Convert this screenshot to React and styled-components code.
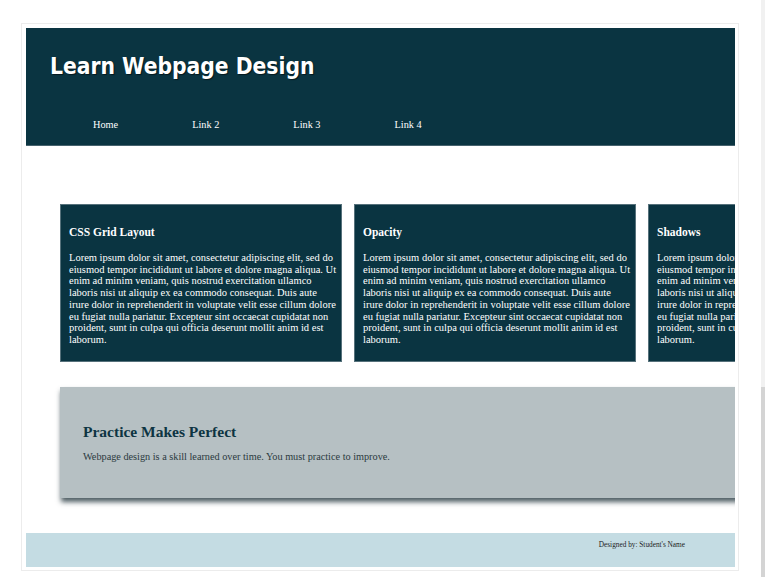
import React from 'react';
import styled, { createGlobalStyle } from 'styled-components';

const GlobalStyle = createGlobalStyle`
  html, body {
    margin: 0;
    background: #ffffff;
    overflow: hidden;
  }
`;

const Page = styled.div`
  padding: 23px 0 0 21px;
`;

const Frame = styled.div`
  width: 709px;
  border: 1px solid #ececec;
  padding: 4px 3px 3px 4px;
`;

const Inner = styled.div`
  overflow: hidden;
  font-family: 'Liberation Serif', 'Times New Roman', serif;
`;

const Header = styled.header`
  height: 118px;
  background: #0a3441;
  border-bottom: 1px solid #46626d;
  display: flex;
  flex-direction: column;
  box-sizing: border-box;
  padding: 25px 0 0 24px;
`;

const Title = styled.h1`
  margin: 0;
  font-family: 'DejaVu Sans Condensed', 'DejaVu Sans', Verdana, sans-serif;
  font-stretch: semi-condensed;
  font-weight: bold;
  font-size: 22.6px;
  line-height: 26px;
  color: #ffffff;
  text-shadow: 1px 1px 1px rgba(0, 0, 0, 0.55);
`;

const Nav = styled.nav`
  display: flex;
  gap: 74px;
  margin-top: 40px;
  padding-left: 43px;
`;

const NavLink = styled.a`
  font-size: 10.3px;
  line-height: 12px;
  color: #ffffff;
  text-decoration: none;
`;

const Cards = styled.section`
  display: flex;
  gap: 12px;
  margin-top: 58px;
  padding-left: 34px;
`;

const Card = styled.article`
  flex: 0 0 282px;
  box-sizing: border-box;
  height: 158px;
  background: #0a3441;
  border: 1px solid #56717b;
  padding: 20px 0 0 8px;
  color: #ffffff;
  overflow: hidden;
`;

const CardTitle = styled.h3`
  margin: 0 0 13px;
  font-size: 11.5px;
  line-height: 14px;
  font-weight: bold;
`;

const CardText = styled.p`
  margin: 0;
  font-size: 10.5px;
  line-height: 11.7px;
  white-space: nowrap;
`;

const Practice = styled.section`
  margin: 25px 0 0 34px;
  width: 760px;
  height: 111px;
  box-sizing: border-box;
  background: #b6c0c3;
  box-shadow: 1px 4px 5px rgba(20, 40, 48, 0.75);
  padding: 36px 0 0 23px;
`;

const PracticeTitle = styled.h2`
  margin: 0 0 10px;
  font-size: 15.5px;
  line-height: 18px;
  font-weight: bold;
  color: #0d3442;
`;

const PracticeText = styled.p`
  margin: 0;
  font-size: 10.25px;
  line-height: 12px;
  color: #2b3a40;
`;

const Footer = styled.footer`
  margin-top: 35px;
  height: 34px;
  background: #c4dce3;
  display: flex;
  justify-content: flex-end;
  padding: 7px 50px 0 0;
  box-sizing: border-box;
`;

const FooterText = styled.p`
  margin: 0;
  font-size: 7.3px;
  line-height: 9px;
  color: #1d1d1d;
`;

const ScrollTrack = styled.div`
  position: fixed;
  top: 0;
  right: 0;
  width: 4px;
  height: 100%;
  background: linear-gradient(#f1f1f1 0 387px, #d4d4d4 387px 100%);
`;

// wrapped the way the original page breaks them
const loremLines = [
  'Lorem ipsum dolor sit amet, consectetur adipiscing elit, sed do',
  'eiusmod tempor incididunt ut labore et dolore magna aliqua. Ut',
  'enim ad minim veniam, quis nostrud exercitation ullamco',
  'laboris nisi ut aliquip ex ea commodo consequat. Duis aute',
  'irure dolor in reprehenderit in voluptate velit esse cillum dolore',
  'eu fugiat nulla pariatur. Excepteur sint occaecat cupidatat non',
  'proident, sunt in culpa qui officia deserunt mollit anim id est',
  'laborum.',
];

const links = ['Home', 'Link 2', 'Link 3', 'Link 4'];
const topics = ['CSS Grid Layout', 'Opacity', 'Shadows'];

export default function App() {
  return (
    <Page>
      <GlobalStyle />
      <Frame>
        <Inner>
          <Header>
            <Title>Learn Webpage Design</Title>
            <Nav>
              {links.map((l) => (
                <NavLink key={l} href="#">
                  {l}
                </NavLink>
              ))}
            </Nav>
          </Header>
          <Cards>
            {topics.map((t) => (
              <Card key={t}>
                <CardTitle>{t}</CardTitle>
                <CardText>
                  {loremLines.map((line, i) => (
                    <React.Fragment key={i}>
                      {line}
                      {i < loremLines.length - 1 && <br />}
                    </React.Fragment>
                  ))}
                </CardText>
              </Card>
            ))}
          </Cards>
          <Practice>
            <PracticeTitle>Practice Makes Perfect</PracticeTitle>
            <PracticeText>
              Webpage design is a skill learned over time. You must practice to improve.
            </PracticeText>
          </Practice>
          <Footer>
            <FooterText>Designed by: Student's Name</FooterText>
          </Footer>
        </Inner>
      </Frame>
      <ScrollTrack />
    </Page>
  );
}
